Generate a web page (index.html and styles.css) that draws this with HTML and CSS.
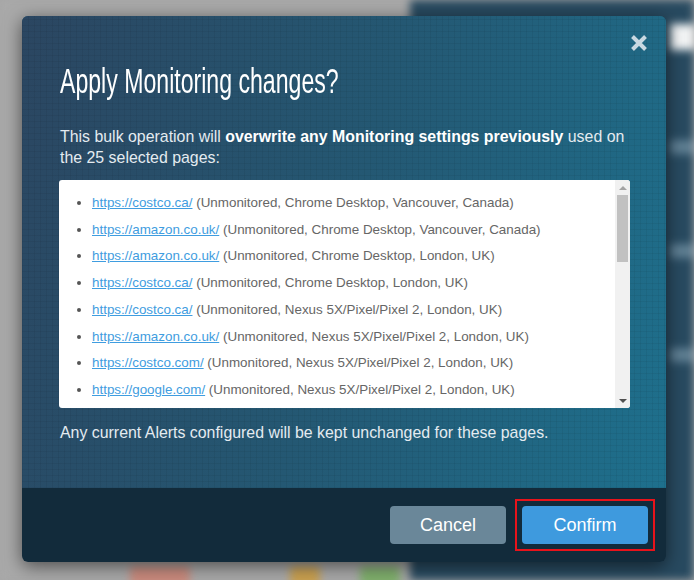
FILE: index.html
```html
<!DOCTYPE html>
<html>
<head>
    <meta charset="utf-8">
    <link rel="stylesheet" href="styles.css">
</head>
<body>
    <div class="backdrop">
        <div class="bg-left">
            <div class="bg-chips">
                <span class="chip chip-red"></span>
                <span class="chip chip-orange"></span>
                <span class="chip chip-green"></span>
            </div>
        </div>
        <div class="bg-right">
            <div class="bg-bar bg-bar-top"></div>
            <div class="bg-bar"></div>
            <div class="bg-bar"></div>
            <div class="bg-bar"></div>
        </div>
    </div>

    <div class="modal">
        <div class="modal-body">
            <button class="modal-close" type="button" title="Close">
                <svg width="18" height="18" viewBox="0 0 18 18">
                    <path d="M2.5 2.5 L15.5 15.5 M15.5 2.5 L2.5 15.5" stroke="currentColor" stroke-width="4"/>
                </svg>
            </button>
            <h1 class="modal-title"><span>Apply Monitoring changes?</span></h1>
            <p class="modal-text">This bulk operation will <b>overwrite any Monitoring settings previously</b> used on the 25 selected pages:</p>
            <div class="page-list">
                <ul>
                    <li><a href="#">https://costco.ca/</a> (Unmonitored, Chrome Desktop, Vancouver, Canada)</li>
                    <li><a href="#">https://amazon.co.uk/</a> (Unmonitored, Chrome Desktop, Vancouver, Canada)</li>
                    <li><a href="#">https://amazon.co.uk/</a> (Unmonitored, Chrome Desktop, London, UK)</li>
                    <li><a href="#">https://costco.ca/</a> (Unmonitored, Chrome Desktop, London, UK)</li>
                    <li><a href="#">https://costco.ca/</a> (Unmonitored, Nexus 5X/Pixel/Pixel 2, London, UK)</li>
                    <li><a href="#">https://amazon.co.uk/</a> (Unmonitored, Nexus 5X/Pixel/Pixel 2, London, UK)</li>
                    <li><a href="#">https://costco.com/</a> (Unmonitored, Nexus 5X/Pixel/Pixel 2, London, UK)</li>
                    <li><a href="#">https://google.com/</a> (Unmonitored, Nexus 5X/Pixel/Pixel 2, London, UK)</li>
                    <li><a href="#">https://google.com/</a> (Unmonitored, Chrome Desktop, London, UK)</li>
                    <li><a href="#">https://costco.com/</a> (Unmonitored, Chrome Desktop, London, UK)</li>
                    <li><a href="#">https://google.co.uk/</a> (Unmonitored, Chrome Desktop, London, UK)</li>
                    <li><a href="#">https://google.ca/</a> (Unmonitored, Chrome Desktop, Vancouver, Canada)</li>
                    <li><a href="#">https://amazon.ca/</a> (Unmonitored, Chrome Desktop, Vancouver, Canada)</li>
                    <li><a href="#">https://costco.com/</a> (Unmonitored, Chrome Desktop, Vancouver, Canada)</li>
                    <li><a href="#">https://google.com/</a> (Unmonitored, Chrome Desktop, Vancouver, Canada)</li>
                    <li><a href="#">https://amazon.com/</a> (Unmonitored, Chrome Desktop, Vancouver, Canada)</li>
                    <li><a href="#">https://amazon.com/</a> (Unmonitored, Chrome Desktop, London, UK)</li>
                    <li><a href="#">https://amazon.ca/</a> (Unmonitored, Chrome Desktop, London, UK)</li>
                    <li><a href="#">https://google.ca/</a> (Unmonitored, Chrome Desktop, London, UK)</li>
                    <li><a href="#">https://google.co.uk/</a> (Unmonitored, Nexus 5X/Pixel/Pixel 2, London, UK)</li>
                    <li><a href="#">https://amazon.com/</a> (Unmonitored, Nexus 5X/Pixel/Pixel 2, London, UK)</li>
                    <li><a href="#">https://amazon.ca/</a> (Unmonitored, Nexus 5X/Pixel/Pixel 2, London, UK)</li>
                    <li><a href="#">https://google.ca/</a> (Unmonitored, Nexus 5X/Pixel/Pixel 2, London, UK)</li>
                    <li><a href="#">https://costco.co.uk/</a> (Unmonitored, Nexus 5X/Pixel/Pixel 2, London, UK)</li>
                    <li><a href="#">https://costco.co.uk/</a> (Unmonitored, Chrome Desktop, London, UK)</li>
                </ul>
                <div class="scrollbar">
                    <span class="scroll-btn scroll-up"></span>
                    <span class="scroll-track"><span class="scroll-thumb"></span></span>
                    <span class="scroll-btn scroll-down"></span>
                </div>
            </div>
            <p class="modal-note">Any current Alerts configured will be kept unchanged for these pages.</p>
        </div>
        <div class="modal-footer">
            <button class="btn btn-cancel" type="button">Cancel</button>
            <span class="highlight">
                <button class="btn btn-confirm" type="button">Confirm</button>
            </span>
        </div>
    </div>
</body>
</html>
```

FILE: styles.css
```css
/* page behind the dialog */

html, body {
    margin: 0;
    height: 100%;
}

body {
    font-family: "Liberation Sans", Arial, sans-serif;
    background-color: #a7a7a7;
    overflow: hidden;
}

.backdrop {
    display: flex;
    height: 100%;
    filter: blur(4px);
}

.bg-left {
    flex: 0 0 410px;
    display: flex;
    align-items: flex-end;
    background-color: #a9a9a9;
}

.bg-chips {
    display: flex;
    padding: 0 0 0 130px;
    margin-bottom: -8px;
}

.chip {
    display: block;
    width: 60px;
    height: 22px;
    border-radius: 4px;
}

.chip-red { background-color: #c98a7d; }
.chip-orange { background-color: #c9a050; width: 30px; margin-left: 100px; }
.chip-green { background-color: #7fae6c; width: 40px; margin-left: 40px; }

.bg-right {
    flex: 1;
    display: flex;
    flex-direction: column;
    gap: 90px;
    padding: 24px 0 0 30px;
    background-color: #284a60;
}

.bg-bar {
    height: 14px;
    background-color: #5f7f93;
    margin-left: 230px;
}

.bg-bar-top {
    height: 26px;
    background-color: #f2f4f5;
}

/* dialog */

.modal {
    position: absolute;
    top: 16px;
    left: 22px;
    width: 644px;
    border-radius: 6px;
    overflow: hidden;
    box-shadow: 0 4px 18px rgba(0, 0, 0, 0.55);
}

.modal-body {
    position: relative;
    padding: 45px 36px 43px 37px;
    color: #e4ebf0;
    background-color: #25566f;
    background-image:
        repeating-linear-gradient(0deg, rgba(0, 0, 0, 0.05) 0 1px, transparent 1px 6px),
        repeating-linear-gradient(90deg, rgba(0, 0, 0, 0.05) 0 1px, transparent 1px 6px),
        linear-gradient(105deg, #2b4661 0%, #245873 50%, #1e708d 100%);
}

.modal-close {
    position: absolute;
    top: 18px;
    right: 18px;
    padding: 0;
    border: 0;
    background: none;
    color: #c8d8e1;
    cursor: pointer;
}

.modal-close svg {
    display: block;
}

.modal-title {
    margin: 0 0 25px 1px;
    font-weight: normal;
    font-size: 35px;
    line-height: 40px;
    color: #ffffff;
    white-space: nowrap;
}

/* the app's title face is a narrow one */
.modal-title span {
    display: inline-block;
    transform: scaleX(0.66);
    transform-origin: left center;
}

.modal-text {
    margin: 0 0 12px 1px;
    font-size: 15.9px;
    line-height: 21px;
}

.modal-text b {
    color: #ffffff;
}

.page-list {
    display: flex;
    height: 228px;
    overflow: hidden;
    background-color: #ffffff;
    border-radius: 3px;
}

.page-list ul {
    flex: 1;
    margin: 0;
    padding: 10px 0 10px 33px;
    list-style: disc;
    color: #666666;
    font-size: 13.4px;
    line-height: 26.7px;
    white-space: nowrap;
}

.page-list li::marker {
    color: #555555;
}

.page-list a {
    color: #3f9de0;
    text-decoration: underline;
}

.scrollbar {
    display: flex;
    flex-direction: column;
    flex: 0 0 15px;
    background-color: #f1f1f1;
}

.scroll-btn {
    display: flex;
    justify-content: center;
    align-items: center;
    height: 15px;
}

.scroll-btn::before {
    content: "";
    border-left: 4px solid transparent;
    border-right: 4px solid transparent;
}

.scroll-up::before {
    border-bottom: 4px solid #a3a3a3;
}

.scroll-down::before {
    border-top: 4px solid #505050;
}

.scroll-track {
    flex: 1;
    padding: 0 2px;
}

.scroll-thumb {
    display: block;
    height: 67px;
    background-color: #c1c1c1;
}

.modal-note {
    margin: 13px 0 0 1px;
    font-size: 15.9px;
    line-height: 24px;
}

.modal-footer {
    display: flex;
    justify-content: flex-end;
    align-items: center;
    gap: 16px;
    padding: 18px 18px 18px 0;
    background-color: #122b3b;
}

.btn {
    height: 38px;
    border: 0;
    border-radius: 4px;
    font-family: "Liberation Sans", Arial, sans-serif;
    font-size: 18px;
    color: #ffffff;
    cursor: pointer;
}

.btn-cancel {
    width: 116px;
    background-color: #6a8799;
}

.highlight {
    display: block;
    padding: 5px;
    margin: -7px;
    border: 2px solid #e8131b;
}

.btn-confirm {
    display: block;
    width: 126px;
    background-color: #3e9ade;
}
```
